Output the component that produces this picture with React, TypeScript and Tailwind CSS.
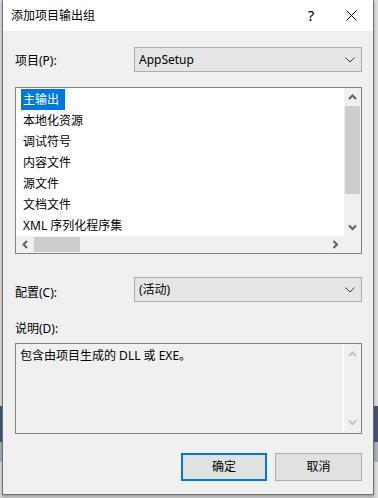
import React from 'react';

const font = "font-['Noto_Sans','Noto_Sans_CJK_SC',sans-serif]";

const items = ['主输出', '本地化资源', '调试符号', '内容文件', '源文件', '文档文件', 'XML 序列化程序集'];

const Chevron = ({ dir, color = '#606060' }: { dir: 'up' | 'down' | 'left' | 'right'; color?: string }) => {
  const pts = {
    up: '1,6 4.5,2.5 8,6',
    down: '1,2.5 4.5,6 8,2.5',
    left: '6,1 2.5,4.5 6,8',
    right: '2.5,1 6,4.5 2.5,8',
  }[dir];
  return (
    <svg width="9" height="9" viewBox="0 0 9 9">
      <polyline points={pts} fill="none" stroke={color} strokeWidth="2" />
    </svg>
  );
};

const ComboBox = ({ value }: { value: string }) => (
  <div className="w-[228px] h-[25px] bg-[#e5e5e5] border border-[#adadad] flex items-center pl-[4px] pr-[6px]">
    <span className="flex-1 text-[12px] text-black">{value}</span>
    <svg width="10" height="6" viewBox="0 0 10 6">
      <polyline points="0.5,0.5 5,5 9.5,0.5" fill="none" stroke="#404040" strokeWidth="1" />
    </svg>
  </div>
);

export default function App() {
  return (
    <div className={`w-[378px] h-[498px] bg-[#dcdcdc] relative overflow-hidden ${font}`}>
      {/* background app strip behind the dialog */}
      <div className="absolute left-0 right-0 top-[406px] h-[36px] bg-[#3f5474]" />
      <div className="absolute left-0 right-0 top-[442px] h-[20px] bg-[#aab0bc]" />

      <div className="relative ml-[2px] w-[372px] h-[495px] border-x border-b border-[#707070] bg-[#f0f0f0] flex flex-col shadow-[0_2px_3px_rgba(0,0,0,0.3)]">
        {/* Title bar */}
        <div className="h-[31px] bg-white flex items-center pl-[8px]">
          <span className="flex-1 text-[12px] text-black leading-none">添加项目输出组</span>
          <span className="w-[20px] text-center text-[15px] text-black mr-[25px]">?</span>
          <svg width="11" height="11" viewBox="0 0 11 11" className="mr-[16px]">
            <path d="M0.5 0.5 L10.5 10.5 M10.5 0.5 L0.5 10.5" stroke="#000" strokeWidth="1" />
          </svg>
        </div>

        {/* Body */}
        <div className="flex flex-col pl-[12px] pr-[11px] text-[12px] text-black">
          <div className="flex items-center mt-[16px]">
            <span className="w-[119px] mt-[3px]">项目(P):</span>
            <ComboBox value="AppSetup" />
          </div>

          {/* List box */}
          <div className="mt-[15px] w-[347px] h-[167px] border border-[#828282] flex flex-col">
            <div className="flex h-[148px]">
              <div className="flex-1 bg-white pt-[1px] overflow-hidden">
                {items.map((t, i) => (
                  <div key={t} className="h-[21px] flex items-center pl-[5px]">
                    <span
                      className={
                        i === 0
                          ? 'bg-[#0078d7] text-white h-[21px] flex items-center pl-[2px] pr-[6px]'
                          : 'pl-[2px]'
                      }
                    >
                      {t}
                    </span>
                  </div>
                ))}
              </div>
              <div className="w-[17px] bg-[#f0f0f0] flex flex-col items-center">
                <div className="h-[18px] flex items-center justify-center">
                  <Chevron dir="up" />
                </div>
                <div className="w-[15px] h-[88px] bg-[#cdcdcd]" />
                <div className="flex-1 flex items-end justify-center pb-[4px]">
                  <Chevron dir="down" />
                </div>
              </div>
            </div>
            <div className="flex h-[17px] bg-[#f0f0f0]">
              <div className="flex-1 flex items-center">
                <div className="w-[18px] flex justify-center">
                  <Chevron dir="left" />
                </div>
                <div className="w-[46px] h-[15px] bg-[#cdcdcd]" />
                <div className="flex-1" />
                <div className="w-[18px] flex justify-center">
                  <Chevron dir="right" />
                </div>
              </div>
              <div className="w-[17px]" />
            </div>
          </div>

          <div className="flex items-center mt-[23px]">
            <span className="w-[119px] mt-[7px]">配置(C):</span>
            <ComboBox value="(活动)" />
          </div>

          <div className="mt-[19px] h-[16px] leading-[16px]">说明(D):</div>

          {/* Description box */}
          <div className="mt-[6px] w-[347px] h-[91px] border border-[#828282] flex">
            <div className="flex-1 pl-[4px] pt-[3px]">包含由项目生成的 DLL 或 EXE。</div>
            <div className="w-[18px] border-l border-white flex flex-col items-center justify-between py-[6px]">
              <Chevron dir="up" color="#c4c4c4" />
              <Chevron dir="down" color="#c4c4c4" />
            </div>
          </div>

          {/* Buttons */}
          <div className="flex justify-end gap-[8px] mt-[19px]">
            <button className="w-[86px] h-[28px] bg-[#e1e1e1] border-2 border-[#0078d7] text-[12px] text-black">
              确定
            </button>
            <button className="w-[87px] h-[28px] bg-[#e1e1e1] border border-[#adadad] text-[12px] text-black">
              取消
            </button>
          </div>
        </div>
      </div>
    </div>
  );
}
